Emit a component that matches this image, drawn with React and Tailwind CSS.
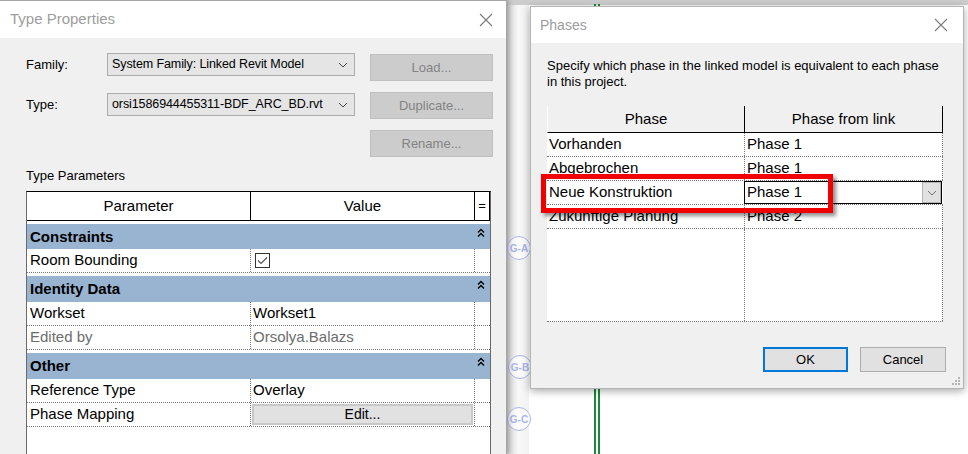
import React from 'react';

const font = "font-['Liberation_Sans',Arial,sans-serif]";

const CloseX = () => (
  <svg width="14" height="14" viewBox="0 0 14 14">
    <path d="M1 1 L13 13 M13 1 L1 13" stroke="#7a7a7a" strokeWidth="1.1" fill="none" />
  </svg>
);

const ChevronDown = ({ color = '#444' }) => (
  <svg width="10" height="6" viewBox="0 0 10 6">
    <path d="M1 1 L5 5 L9 1" stroke={color} strokeWidth="1" fill="none" />
  </svg>
);

const Collapse = () => (
  <svg width="8" height="10" viewBox="0 0 8 10">
    <path d="M1 4.5 L4 1.5 L7 4.5 M1 8.5 L4 5.5 L7 8.5" stroke="#000" strokeWidth="1.4" fill="none" />
  </svg>
);

const ComboBox = ({ value, className = '' }) => (
  <div className={`w-[248px] h-[23px] border border-[#acacac] bg-[#e5e5e5] flex items-center justify-between pl-[4px] pr-[6px] text-[12.5px] tracking-[-0.1px] text-black ${className}`}>
    <span className="whitespace-nowrap">{value}</span>
    <ChevronDown />
  </div>
);

const DisabledButton = ({ children }) => (
  <div className="w-[123px] h-[27px] border border-[#bfbfbf] bg-[#cccccc] text-[#838383] text-[13px] flex items-center justify-center">
    {children}
  </div>
);

const GroupRow = ({ title, first }) => (
  <div className={`${first ? 'h-[25px]' : 'h-[26px]'} mt-[3px] bg-[#99b4d1] flex items-start justify-between pl-[3px] pr-[5px]`}>
    <span className="text-[15px] font-bold leading-[25px]">{title}</span>
    <span className="pt-[4px]"><Collapse /></span>
  </div>
);

const DataRow = ({ name, children, muted }) => (
  <div className={`h-[24px] flex border-b border-dotted border-[#7a7a7a] text-[15px] ${muted ? 'text-[#6d6d6d]' : 'text-black'}`}>
    <div className="w-[224px] pl-[3px] border-r border-dotted border-[#7a7a7a] flex items-center whitespace-nowrap">{name}</div>
    <div className="w-[224px] pl-[2px] border-r border-dotted border-[#7a7a7a] flex items-center whitespace-nowrap">{children}</div>
    <div className="w-[15px]" />
  </div>
);

const TypeProperties = () => (
  <div className="relative z-10 w-[507px] h-full shrink-0 flex flex-col bg-[#f0f0f0] border-t border-r border-[#a5a5a5] shadow-[2px_0_5px_rgba(0,0,0,0.25)]">
    <div className="h-[37px] bg-white flex items-center justify-between pl-[10px] pr-[13px] shrink-0">
      <span className="text-[15px] text-[#9d9d9d]">Type Properties</span>
      <CloseX />
    </div>
    <div className="flex-1 flex flex-col pl-[26px] text-[13px] text-black min-h-0">
      <div className="mt-[16px] h-[27px] flex items-start">
        <span className="w-[81px] leading-[23px] -mt-[1px]">Family:</span>
        <ComboBox value="System Family: Linked Revit Model" className="-mt-[1px]" />
        <div className="ml-[15px]"><DisabledButton>Load...</DisabledButton></div>
      </div>
      <div className="mt-[11px] h-[27px] flex items-start">
        <span className="w-[81px] leading-[23px] mt-[1px]">Type:</span>
        <ComboBox value="orsi1586944455311-BDF_ARC_BD.rvt" className="mt-[1px]" />
        <div className="ml-[15px]"><DisabledButton>Duplicate...</DisabledButton></div>
      </div>
      <div className="mt-[11px] h-[27px] flex">
        <div className="ml-[344px]"><DisabledButton>Rename...</DisabledButton></div>
      </div>
      <div className="mt-[11px] leading-[16px]">Type Parameters</div>
      <div className="mt-[7px] w-[465px] flex-1 bg-white border-x border-[#6a6a6a] border-t border-t-black flex flex-col">
        <div className="h-[29px] shrink-0 flex border-b border-black text-[15px]">
          <div className="w-[224px] border-r border-black flex items-center justify-center">Parameter</div>
          <div className="w-[224px] border-r border-black flex items-center justify-center">Value</div>
          <div className="w-[15px] border-r border-black flex items-center justify-center text-[13px]">=</div>
        </div>
        <GroupRow title="Constraints" first />
        <DataRow name="Room Bounding">
          <div className="ml-[2px] w-[15px] h-[15px] border border-[#333] bg-white flex items-center justify-center">
            <svg width="11" height="9" viewBox="0 0 11 9">
              <path d="M1 4.5 L4 7.5 L10 1.5" stroke="#555" strokeWidth="1.2" fill="none" />
            </svg>
          </div>
        </DataRow>
        <GroupRow title="Identity Data" />
        <DataRow name="Workset">Workset1</DataRow>
        <DataRow name="Edited by" muted>Orsolya.Balazs</DataRow>
        <GroupRow title="Other" />
        <DataRow name="Reference Type">Overlay</DataRow>
        <div className="h-[24px] flex border-b border-dotted border-[#7a7a7a] text-[15px]">
          <div className="w-[224px] pl-[3px] border-r border-dotted border-[#7a7a7a] flex items-center">Phase Mapping</div>
          <div className="w-[224px] py-[1px] pl-[1px] pr-[1px] border-r border-dotted border-[#7a7a7a]">
            <div className="h-[21px] border-2 border-[#c8c8c8] bg-[#e1e1e1] flex items-center justify-center text-[14px]">Edit...</div>
          </div>
          <div className="w-[15px]" />
        </div>
      </div>
    </div>
  </div>
);

const PhaseRow = ({ phase, link, editing }) => (
  <div className="h-[24px] flex border-b border-dotted border-[#7a7a7a] text-[15px] text-black">
    <div className="w-[198px] pl-[2px] border-r border-dotted border-[#7a7a7a] flex items-center whitespace-nowrap">{phase}</div>
    {editing ? (
      <div className="w-[198px]">
        <div className="-ml-[1px] mr-[1px] h-[23px] border border-black bg-white flex items-center justify-between pl-[2px]">
          <span>{link}</span>
          <div className="w-[19px] h-[21px] bg-[#e1e1e1] border border-[#b4b4b4] flex items-center justify-center">
            <ChevronDown color="#707070" />
          </div>
        </div>
      </div>
    ) : (
      <div className="w-[198px] pl-[2px] border-r border-dotted border-[#7a7a7a] flex items-center whitespace-nowrap">{link}</div>
    )}
  </div>
);

const Grip = () => (
  <div className="absolute right-[3px] bottom-[3px] grid grid-cols-3 gap-[1px]">
    {[0, 0, 1, 0, 1, 1, 1, 1, 1].map((on, i) => (
      <div key={i} className={`w-[2px] h-[2px] ${on ? 'bg-[#b5b5b5]' : ''}`} />
    ))}
  </div>
);

const PhasesDialog = () => (
  <div className="absolute left-[23px] top-[6px] w-[434px] h-[383px] flex flex-col border border-[#b4b4b4] bg-[#f0f0f0] shadow-[0_2px_8px_rgba(0,0,0,0.35)]">
    <div className="h-[36px] shrink-0 bg-white flex items-center justify-between pl-[9px] pr-[15px]">
      <span className="text-[14px] text-[#9d9d9d]">Phases</span>
      <CloseX />
    </div>
    <div className="relative flex-1 flex flex-col pl-[16px] pt-[15px] text-black">
      <p className="text-[13px] leading-[16px] whitespace-nowrap">
        Specify which phase in the linked model is equivalent to each phase
        <br />
        in this project.
      </p>
      <div className="mt-[16px] w-[396px] flex flex-col">
        <div className="h-[27px] flex border-b border-black border-l border-l-white text-[15px]">
          <div className="w-[197px] border-r border-black flex items-center justify-center">Phase</div>
          <div className="w-[198px] border-r border-black flex items-center justify-center">Phase from link</div>
        </div>
        <div className="h-[189px] bg-white flex flex-col border-b border-dotted border-[#7a7a7a]">
          <PhaseRow phase="Vorhanden" link="Phase 1" />
          <PhaseRow phase="Abgebrochen" link="Phase 1" />
          <PhaseRow phase="Neue Konstruktion" link="Phase 1" editing />
          <PhaseRow phase="Zukünftige Planung" link="Phase 2" />
          <div className="flex-1 flex">
            <div className="w-[198px] border-r border-dotted border-[#7a7a7a]" />
            <div className="w-[198px] border-r border-dotted border-[#7a7a7a]" />
          </div>
        </div>
      </div>
      <div className="mt-[25px] flex justify-end gap-[12px] pr-[17px] text-[13px]">
        <div className="w-[85px] h-[25px] border-2 border-[#0078d7] bg-[#e1e1e1] flex items-center justify-center">OK</div>
        <div className="w-[86px] h-[25px] border border-[#adadad] bg-[#e1e1e1] flex items-center justify-center">Cancel</div>
      </div>
      <Grip />
    </div>
  </div>
);

const Bubble = ({ label, className }) => (
  <div className={`absolute w-[24px] h-[24px] rounded-full border border-[#aab6ea] flex items-center justify-center text-[10px] font-bold text-[#aab6ea] bg-white/60 ${className}`}>
    {label}
  </div>
);

const Canvas = () => (
  <div className="relative flex-1 h-full bg-white overflow-hidden">
    <div className="absolute left-0 top-0 bottom-0 w-[22px] bg-gradient-to-r from-[#d2d2d2] via-[#f8f8f8] to-[#f2f2f2]" />
    <div className="absolute left-0 right-0 top-0 h-[5px] bg-[#cdcdcd]" />
    <div className="absolute left-[87px] top-[4px] bottom-0 w-[2px] bg-[#1b8a3c]" />
    <div className="absolute left-[91px] top-[4px] bottom-0 w-[2px] bg-[#1b8a3c]" />
    <Bubble label="G-A" className="left-0 top-[236px]" />
    <Bubble label="G-B" className="left-[1px] top-[355px]" />
    <Bubble label="G-C" className="left-0 top-[407px]" />
    <PhasesDialog />
  </div>
);

export default function App() {
  return (
    <div className={`relative w-[968px] h-[454px] overflow-hidden flex bg-white ${font}`}>
      <TypeProperties />
      <Canvas />
      <div className="absolute left-[541px] top-[174px] w-[292px] h-[39px] border-[5px] border-[#f00000] shadow-[3px_3px_4px_rgba(0,0,0,0.45)] z-20" />
    </div>
  );
}
